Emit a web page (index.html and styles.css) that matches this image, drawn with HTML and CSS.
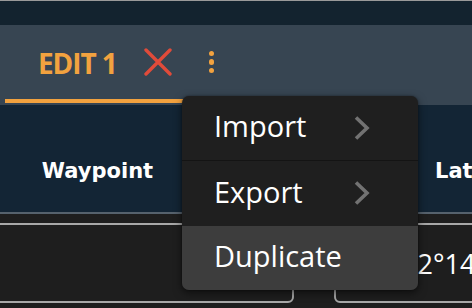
FILE: index.html
```html
<!DOCTYPE html>
<html>
<head>
<meta charset="utf-8">
<link rel="stylesheet" href="styles.css">
</head>
<body>
<div class="app">
  <div class="appbar"></div>
  <div class="tabs">
    <div class="tab">
      <span class="tab-label">EDIT 1</span>
      <button class="tab-close" aria-label="Close">
        <svg width="28" height="28" viewBox="0 0 28 28"><path d="M2 2 L26 26 M26 2 L2 26" stroke="#e04b3a" stroke-width="3.4" stroke-linecap="round" fill="none"/></svg>
      </button>
      <button class="tab-more" aria-label="More">
        <span class="dot"></span><span class="dot"></span><span class="dot"></span>
      </button>
    </div>
  </div>
  <div class="table-head">
    <div class="th th-waypoint">Waypoint</div>
    <div class="th th-lat">Latitude</div>
  </div>
  <div class="table-row">
    <div class="field field-name"></div>
    <div class="field field-lat"><span class="field-text">52°14.250' N</span></div>
  </div>

  <div class="menu">
    <div class="menu-item sep">
      <span>Import</span>
      <svg class="chev" width="18" height="26" viewBox="0 0 18 26"><path d="M3 2.5 L14 13 L3 23.5" stroke="#727272" stroke-width="3.6" fill="none"/></svg>
    </div>
    <div class="menu-item tall">
      <span>Export</span>
      <svg class="chev" width="18" height="26" viewBox="0 0 18 26"><path d="M3 2.5 L14 13 L3 23.5" stroke="#727272" stroke-width="3.6" fill="none"/></svg>
    </div>
    <div class="menu-item active">
      <span>Duplicate</span>
    </div>
  </div>
</div>
</body>
</html>
```

FILE: styles.css
```css
html, body {
  margin: 0;
  padding: 0;
  background: #1e1e1e;
  overflow: hidden;
}

.app {
  position: relative;
  width: 472px;
  height: 308px;
  overflow: hidden;
  border-top: 1px solid #9a9a9a;
  box-sizing: border-box;
  font-family: "Open Sans", "Liberation Sans", sans-serif;
}

.appbar {
  height: 24px;
  background: #13232f;
}

.tabs {
  height: 80px;
  background: #374552;
  padding-left: 5px;
  display: flex;
  align-items: flex-start;
}

.tab {
  height: 74px;
  border-bottom: 4px solid #f2a23f;
  display: flex;
  align-items: center;
  padding: 0 33px 0 33px;
  box-sizing: content-box;
}

.tab-label {
  color: #f2a23f;
  font-weight: 700;
  font-size: 28px;
  letter-spacing: -1.1px;
  line-height: 1;
  margin-top: 2px;
}

.tab-close {
  background: none;
  border: 0;
  padding: 0;
  margin-left: 27px;
  width: 28px;
  height: 28px;
  display: flex;
}

.tab-more {
  background: none;
  border: 0;
  padding: 0;
  margin-left: 36px;
  width: 8px;
  display: flex;
  flex-direction: column;
  align-items: center;
  gap: 3px;
}

.dot {
  width: 5.6px;
  height: 5.6px;
  border-radius: 50%;
  background: #f2a23f;
}

.table-head {
  height: 107px;
  background: #132535;
  border-bottom: 2px solid #56626d;
  display: grid;
  grid-template-columns: 195px 1fr;
  color: #ffffff;
  font-family: "DejaVu Sans", sans-serif;
  font-weight: bold;
  font-size: 21px;
  line-height: 24px;
}

.th {
  padding-top: 54px;
  white-space: nowrap;
}

.th-waypoint {
  text-align: center;
}

.th-lat {
  padding-left: 240px;
}

.table-row {
  padding-top: 9px;
  display: flex;
  gap: 40px;
}

.field {
  height: 76px;
  border: 2px solid #a8a8a8;
  border-radius: 6px;
  display: flex;
  align-items: center;
  color: #ffffff;
  font-size: 27px;
  white-space: nowrap;
}

.field-name {
  width: 300px;
  margin-left: -10px;
  flex: none;
}

.field-lat {
  flex: 1;
  margin-right: -20px;
  padding-left: 66px;
}

.menu {
  position: absolute;
  left: 182px;
  top: 95px;
  width: 236px;
  background: #1f1f1f;
  border-radius: 7px;
  overflow: hidden;
  box-shadow: 0 3px 8px rgba(0, 0, 0, 0.55), 0 0 2px rgba(0, 0, 0, 0.4);
  color: #ffffff;
  font-size: 29px;
}

.menu-item {
  height: 64px;
  box-sizing: border-box;
  display: flex;
  align-items: center;
  padding-left: 32px;
  padding-bottom: 5px;
  position: relative;
}

.menu-item.sep {
  height: 65px;
  border-bottom: 1px solid #141414;
}

.menu-item.tall {
  height: 65px;
}

.menu-item.active {
  background: #3d3d3d;
}

.chev {
  position: absolute;
  left: 171px;
  top: 19px;
}
```
